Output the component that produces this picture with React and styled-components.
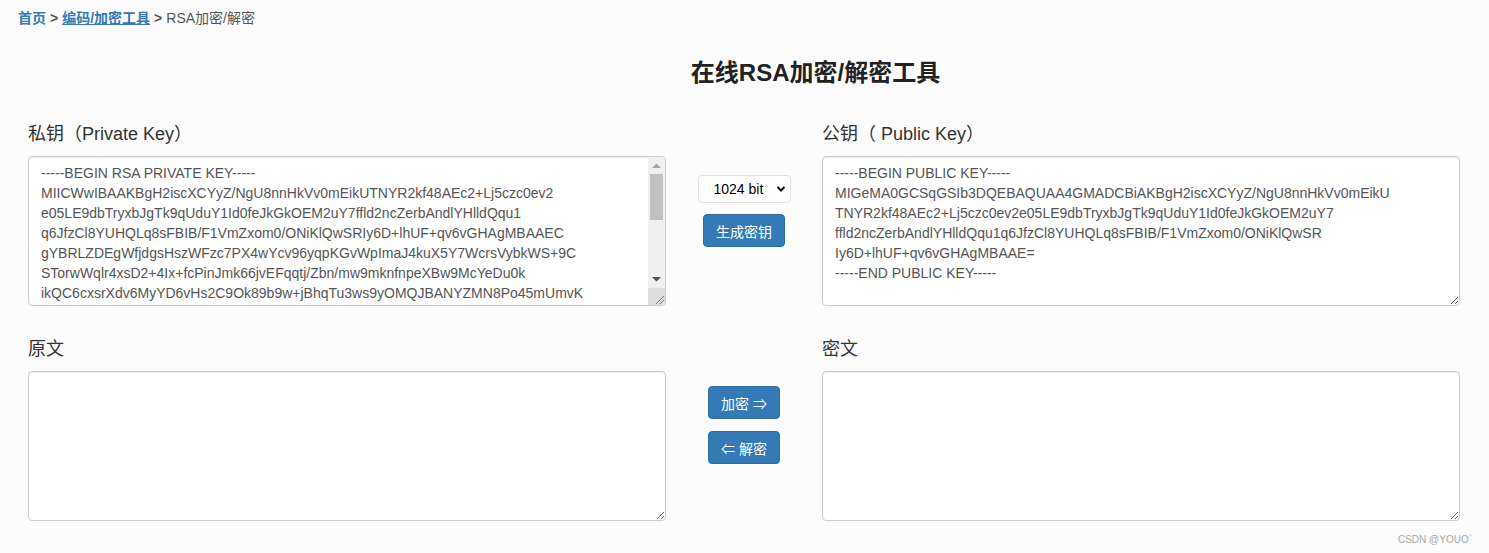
import React from "react";
import styled, { createGlobalStyle } from "styled-components";

const GlobalStyle = createGlobalStyle`
  html, body {
    margin: 0;
    padding: 0;
    background: #fcfcfc;
    font-family: "Liberation Sans", Arial, "Noto Sans CJK SC", sans-serif;
    color: #333;
  }
`;

const Page = styled.div`
  position: relative;
  width: 1489px;
  height: 553px;
  overflow: hidden;
`;

const Breadcrumb = styled.div`
  padding: 8px 0 0 18px;
  height: 20px;
  line-height: 20px;
  font-size: 14px;
  color: #555;
  a {
    color: #337ab7;
    font-weight: 700;
    text-decoration: none;
    &.current-section {
      text-decoration: underline;
    }
  }
  .sep {
    font-weight: 700;
    margin: 0 4px;
  }
`;

const Title = styled.h1`
  margin: 31px 0 35px;
  padding-left: 142px;
  height: 28px;
  line-height: 28px;
  font-size: 24px;
  font-weight: 700;
  color: #222;
  text-align: center;
`;

const ToolRow = styled.div`
  display: grid;
  grid-template-columns: 1fr 156px 1fr;
  padding: 0 29px 0 28px;
  margin-bottom: 31px;
`;

const Column = styled.div`
  display: flex;
  flex-direction: column;
`;

const FieldLabel = styled.div`
  height: 24px;
  line-height: 25px;
  font-size: 18px;
  color: #333;
  margin-bottom: 10px;
  white-space: pre;
`;

const BoxWrap = styled.div`
  position: relative;
  height: 150px;
`;

const TextBox = styled.textarea`
  box-sizing: border-box;
  display: block;
  width: 100%;
  height: 150px;
  margin: 0;
  padding: ${(p) => (p.$scroll ? "6px 29px 6px 12px" : "6px 12px")};
  font-family: "Liberation Sans", Arial, sans-serif;
  font-size: 14px;
  line-height: 20px;
  color: #555;
  background: #fff;
  border: 1px solid #ccc;
  border-radius: 4px;
  box-shadow: inset 0 1px 1px rgba(0, 0, 0, 0.075);
  outline: none;
  resize: both;
`;

/* drawn scrollbar laid over the private key box */
const ScrollBar = styled.div`
  position: absolute;
  top: 1px;
  right: 1px;
  bottom: 1px;
  width: 17px;
  display: flex;
  flex-direction: column;
  background: #f0f0f0;
  border-radius: 0 3px 3px 0;
  overflow: hidden;
  pointer-events: none;
`;

const ScrollArrow = styled.div`
  height: 17px;
  display: flex;
  align-items: center;
  justify-content: center;
`;

const ScrollThumb = styled.div`
  height: 46px;
  margin: 0 2px;
  background: #c1c1c1;
`;

const ScrollSpace = styled.div`
  flex: 1;
`;

const ScrollCorner = styled.div`
  height: 17px;
  background: #dcdcdc;
  display: flex;
  align-items: flex-end;
  justify-content: flex-end;
`;

const Middle = styled.div`
  display: flex;
  flex-direction: column;
  align-items: center;
  padding-top: ${(p) => p.$offset}px;
  gap: ${(p) => p.$gap}px;
`;

const SelectWrap = styled.div`
  position: relative;
  width: 93px;
  height: 28px;
  svg {
    position: absolute;
    right: 5px;
    top: 10px;
    pointer-events: none;
  }
`;

const BitSelect = styled.select`
  appearance: none;
  box-sizing: border-box;
  width: 100%;
  height: 100%;
  padding: 0 0 0 15px;
  font-family: "Liberation Sans", Arial, sans-serif;
  font-size: 14px;
  color: #000;
  background: #fff;
  border: 1px solid #e2e2e2;
  border-radius: 4px;
  outline: none;
`;

const Button = styled.button`
  box-sizing: border-box;
  height: 33px;
  padding: 0 12px;
  font-family: "Liberation Sans", Arial, "Noto Sans CJK SC", sans-serif;
  font-size: 14px;
  color: #fff;
  background-color: #337ab7;
  border: 1px solid #2e6da4;
  border-radius: 4px;
  cursor: pointer;
  white-space: nowrap;
`;

const Watermark = styled.div`
  position: absolute;
  right: 17px;
  bottom: 8px;
  font-size: 10px;
  color: #a8a8a8;
`;

const PRIVATE_KEY = `-----BEGIN RSA PRIVATE KEY-----
MIICWwIBAAKBgH2iscXCYyZ/NgU8nnHkVv0mEikUTNYR2kf48AEc2+Lj5czc0ev2
e05LE9dbTryxbJgTk9qUduY1Id0feJkGkOEM2uY7ffld2ncZerbAndlYHlldQqu1
q6JfzCl8YUHQLq8sFBIB/F1VmZxom0/ONiKlQwSRIy6D+lhUF+qv6vGHAgMBAAEC
gYBRLZDEgWfjdgsHszWFzc7PX4wYcv96yqpKGvWpImaJ4kuX5Y7WcrsVybkWS+9C
STorwWqlr4xsD2+4Ix+fcPinJmk66jvEFqqtj/Zbn/mw9mknfnpeXBw9McYeDu0k
ikQC6cxsrXdv6MyYD6vHs2C9Ok89b9w+jBhqTu3ws9yOMQJBANYZMN8Po45mUmvK
q2X8eRk1Tz3dVnL0bGw7cQhJ5sPfA9uE4yM6tKiZrN2xWoC8gDjHlB1vYsUa0mQp
3nFkR7AkECQQCWk5mT8oHc2LdXy0ZfN9gJbQe4rV6uPsA1tKwYi3EnMhGqDlB7xC
oZp2uFvWj0SaTd8cKyLb5mE6rN1gHqXsAkEAjP4tRzW9dYv0xLm2QbGkF7nCe3hU
Ts6yOaZ1wMlH8qJrB5pVdKgN0cXiE4fYo2uSb9tA7mLzQwGeRhJnCkD6vQJAXb3m
Lk8pWz1YtRq0cNf6hGvJ2sUoE9dAi4bMy7KxT5nQeHlZ3rFwCg0jV8uPtSkD1aBo
YmI6fNqXJ2hBwQJAQm5vE8tZkRy3LpC0dHs7aWgX1jN9uFbT4iKoY2eGqMz6rVxD
pS8cAhUlJ0wnT3kOeBfRi5yMgQd7tZv2XqLs1A==
-----END RSA PRIVATE KEY-----`;

const PUBLIC_KEY = `-----BEGIN PUBLIC KEY-----
MIGeMA0GCSqGSIb3DQEBAQUAA4GMADCBiAKBgH2iscXCYyZ/NgU8nnHkVv0mEikU
TNYR2kf48AEc2+Lj5czc0ev2e05LE9dbTryxbJgTk9qUduY1Id0feJkGkOEM2uY7
ffld2ncZerbAndlYHlldQqu1q6JfzCl8YUHQLq8sFBIB/F1VmZxom0/ONiKlQwSR
Iy6D+lhUF+qv6vGHAgMBAAE=
-----END PUBLIC KEY-----`;

function FakeScrollbar() {
  return (
    <ScrollBar>
      <ScrollArrow>
        <svg width="9" height="5" viewBox="0 0 9 5">
          <path d="M0 5 L4.5 0.5 L9 5 Z" fill="#a3a3a3" />
        </svg>
      </ScrollArrow>
      <ScrollThumb />
      <ScrollSpace />
      <ScrollArrow>
        <svg width="9" height="5" viewBox="0 0 9 5">
          <path d="M0 0 L9 0 L4.5 4.5 Z" fill="#505050" />
        </svg>
      </ScrollArrow>
      <ScrollCorner>
        <svg width="12" height="12" viewBox="0 0 12 12">
          <path d="M11 3 L3 11 M11 7 L7 11" stroke="#7a7a7a" strokeWidth="1" />
        </svg>
      </ScrollCorner>
    </ScrollBar>
  );
}

export default function App() {
  return (
    <Page>
      <GlobalStyle />
      <Breadcrumb>
        <a href="#">首页</a>
        <span className="sep">&gt;</span>
        <a href="#" className="current-section">编码/加密工具</a>
        <span className="sep">&gt;</span>
        <span>RSA加密/解密</span>
      </Breadcrumb>

      <Title>在线RSA加密/解密工具</Title>

      <ToolRow>
        <Column>
          <FieldLabel>私钥（Private Key）</FieldLabel>
          <BoxWrap>
            <TextBox $scroll defaultValue={PRIVATE_KEY} spellCheck={false} />
            <FakeScrollbar />
          </BoxWrap>
        </Column>
        <Middle $offset={53} $gap={11}>
          <SelectWrap>
            <BitSelect defaultValue="1024">
              <option value="512">512 bit</option>
              <option value="1024">1024 bit</option>
              <option value="2048">2048 bit</option>
              <option value="4096">4096 bit</option>
            </BitSelect>
            <svg width="10" height="8" viewBox="0 0 10 8">
              <path d="M1.5 2 L5 5.5 L8.5 2" fill="none" stroke="#111" strokeWidth="2" />
            </svg>
          </SelectWrap>
          <Button>生成密钥</Button>
        </Middle>
        <Column>
          <FieldLabel>公钥（ Public Key）</FieldLabel>
          <BoxWrap>
            <TextBox defaultValue={PUBLIC_KEY} spellCheck={false} />
          </BoxWrap>
        </Column>
      </ToolRow>

      <ToolRow>
        <Column>
          <FieldLabel>原文</FieldLabel>
          <BoxWrap>
            <TextBox spellCheck={false} />
          </BoxWrap>
        </Column>
        <Middle $offset={49} $gap={12}>
          <Button>加密 ⇒</Button>
          <Button>⇐ 解密</Button>
        </Middle>
        <Column>
          <FieldLabel>密文</FieldLabel>
          <BoxWrap>
            <TextBox spellCheck={false} />
          </BoxWrap>
        </Column>
      </ToolRow>

      <Watermark>CSDN @YOUO`</Watermark>
    </Page>
  );
}
